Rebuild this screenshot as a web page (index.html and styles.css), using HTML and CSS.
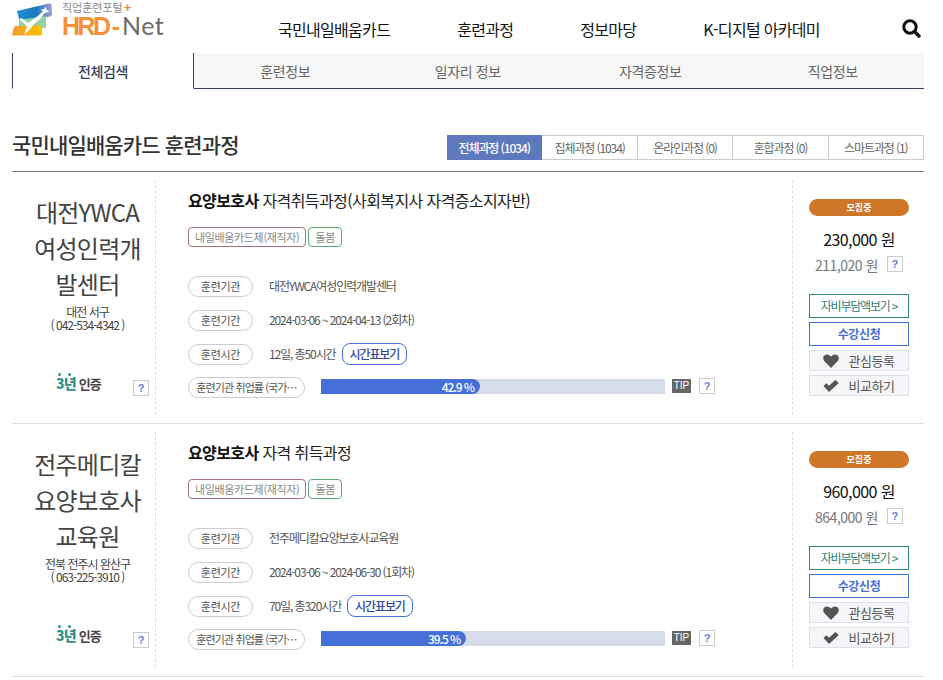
FILE: index.html
```html
<!DOCTYPE html>
<html lang="ko">
<head>
    <meta charset="UTF-8">
    <title>HRD-Net</title>
    <link rel="stylesheet" href="styles.css">
</head>
<body>
    <div class="container">
        <header class="top">
            <a class="logo">
                <svg class="logo-mark" width="40" height="33" viewBox="0 0 40 33">
                    <defs>
                        <linearGradient id="cardTop" x1="0" y1="0" x2="1" y2="0">
                            <stop offset="0" stop-color="#1b8fd6"/>
                            <stop offset="0.55" stop-color="#1f78c0"/>
                            <stop offset="1" stop-color="#a79ccf"/>
                        </linearGradient>
                        <linearGradient id="cardBottom" x1="0" y1="0" x2="1" y2="0">
                            <stop offset="0" stop-color="#f39a2e"/>
                            <stop offset="1" stop-color="#fbc400"/>
                        </linearGradient>
                    </defs>
                    <path d="M5 8 L37 0.500 Q39.500 0 39.600 2.500 L40 13 L8 20 Z" fill="url(#cardTop)"/>
                    <path d="M7 17 L34 13 L34 25 L7 25 Z" fill="#93d3a6"/>
                    <path d="M0 32.500 L1.500 25 Q2 23 4.500 23 L30 22.500 L30 32.500 Z" fill="url(#cardBottom)"/>
                    <path d="M7 16 Q10 14 12 17 L16 20 L22 16 L27 12 L31 8 L28.500 6 L32 6.500 L34 3.500 L34.500 7 L37.500 8.500 L33 10 L28 16 L22 21 L19 25 L12 32 L15 24 L13 21 Z" fill="#fff"/>
                </svg>
                <span class="logo-text">
                    <span class="logo-sub">직업훈련포털<b>+</b></span>
                    <span class="logo-name"><b>HRD</b><i>-</i>Net</span>
                </span>
            </a>
            <nav class="gnb">
                <a>국민내일배움카드</a>
                <a>훈련과정</a>
                <a>정보마당</a>
                <a>K-디지털 아카데미</a>
            </nav>
            <svg class="search" width="20" height="20" viewBox="0 0 20 20">
                <circle cx="9" cy="9" r="6.2" fill="none" stroke="#111" stroke-width="3"/>
                <path d="M13.5 13.5 L18 18" stroke="#111" stroke-width="3.4" stroke-linecap="round"/>
            </svg>
        </header>

        <div class="tabs">
            <a class="tab active">전체검색</a>
            <a class="tab">훈련정보</a>
            <a class="tab">일자리 정보</a>
            <a class="tab">자격증정보</a>
            <a class="tab">직업정보</a>
        </div>

        <div class="list-head">
            <h2>국민내일배움카드 훈련과정</h2>
            <div class="filters">
                <a class="on">전체과정 (1034)</a>
                <a>집체과정 (1034)</a>
                <a>온라인과정 (0)</a>
                <a>혼합과정 (0)</a>
                <a>스마트과정 (1)</a>
            </div>
        </div>

        <div class="list">
            <article class="card">
                <div class="org">
                    <div class="org-name">대전YWCA<br>여성인력개<br>발센터</div>
                    <div class="org-addr">대전 서구<br>( 042-534-4342 )</div>
                    <div class="cert">
                        <span class="cert-text"><b>3년</b> 인증</span>
                        <span class="q">?</span>
                    </div>
                </div>
                <div class="info">
                    <h3><b>요양보호사</b> 자격취득과정(사회복지사 자격증소지자반)</h3>
                    <div class="labels">
                        <span class="label red">내일배움카드제(재직자)</span>
                        <span class="label green">돌봄</span>
                    </div>
                    <div class="row"><span class="pill">훈련기관</span><span class="row-text">대전YWCA여성인력개발센터</span></div>
                    <div class="row"><span class="pill">훈련기간</span><span class="row-text">2024-03-06 ~ 2024-04-13 (2회차)</span></div>
                    <div class="row"><span class="pill">훈련시간</span><span class="row-text">12일, 총50시간</span><a class="time-btn">시간표보기</a></div>
                    <div class="row rate">
                        <span class="pill wide">훈련기관 취업률 (국가…</span>
                        <div class="bar"><div class="fill" style="width: 46.2%">42.9 %</div></div>
                        <span class="tip">TIP</span>
                        <span class="q">?</span>
                    </div>
                </div>
                <div class="side">
                    <div class="status">모집중</div>
                    <div class="price">230,000 원</div>
                    <div class="price-sub">211,020 원<span class="q">?</span></div>
                    <a class="btn teal">자비부담액보기 &gt;</a>
                    <a class="btn blue">수강신청</a>
                    <a class="btn gray">
                        <svg width="16" height="14" viewBox="0 0 16 14"><path d="M8 14 L1.2 7 Q-0.8 4 1.2 1.6 Q4.5 -1 8 2.4 Q11.500 -1 14.800 1.600 Q16.800 4 14.800 7 Z" fill="#555"/></svg>
                        <span>관심등록</span>
                    </a>
                    <a class="btn gray">
                        <svg width="16" height="12" viewBox="0 0 16 12"><path d="M0.500 6 L3.500 3.200 L6 5.700 L12.300 0 L15.800 3 L6 12 Z" fill="#555"/></svg>
                        <span>비교하기</span>
                    </a>
                </div>
            </article>

            <article class="card">
                <div class="org">
                    <div class="org-name">전주메디칼<br>요양보호사<br>교육원</div>
                    <div class="org-addr">전북 전주시 완산구<br>( 063-225-3910 )</div>
                    <div class="cert">
                        <span class="cert-text"><b>3년</b> 인증</span>
                        <span class="q">?</span>
                    </div>
                </div>
                <div class="info">
                    <h3><b>요양보호사</b> 자격 취득과정</h3>
                    <div class="labels">
                        <span class="label red">내일배움카드제(재직자)</span>
                        <span class="label green">돌봄</span>
                    </div>
                    <div class="row"><span class="pill">훈련기관</span><span class="row-text">전주메디칼요양보호사교육원</span></div>
                    <div class="row"><span class="pill">훈련기간</span><span class="row-text">2024-03-06 ~ 2024-06-30 (1회차)</span></div>
                    <div class="row"><span class="pill">훈련시간</span><span class="row-text">70일, 총320시간</span><a class="time-btn">시간표보기</a></div>
                    <div class="row rate">
                        <span class="pill wide">훈련기관 취업률 (국가…</span>
                        <div class="bar"><div class="fill" style="width: 42.2%">39.5 %</div></div>
                        <span class="tip">TIP</span>
                        <span class="q">?</span>
                    </div>
                </div>
                <div class="side">
                    <div class="status">모집중</div>
                    <div class="price">960,000 원</div>
                    <div class="price-sub">864,000 원<span class="q">?</span></div>
                    <a class="btn teal">자비부담액보기 &gt;</a>
                    <a class="btn blue">수강신청</a>
                    <a class="btn gray">
                        <svg width="16" height="14" viewBox="0 0 16 14"><path d="M8 14 L1.2 7 Q-0.8 4 1.2 1.6 Q4.5 -1 8 2.4 Q11.500 -1 14.800 1.600 Q16.800 4 14.800 7 Z" fill="#555"/></svg>
                        <span>관심등록</span>
                    </a>
                    <a class="btn gray">
                        <svg width="16" height="12" viewBox="0 0 16 12"><path d="M0.500 6 L3.500 3.200 L6 5.700 L12.300 0 L15.800 3 L6 12 Z" fill="#555"/></svg>
                        <span>비교하기</span>
                    </a>
                </div>
            </article>
        </div>
    </div>
</body>
</html>
```

FILE: styles.css
```css
* {
    box-sizing: border-box;
}
body {
    margin: 0;
    font-family: "Noto Sans CJK KR", "Noto Sans", sans-serif;
    color: #333;
    background: #fff;
    overflow: hidden;
}
b, i {
    font-style: normal;
}
.container {
    width: 912px;
    margin-left: 12px;
}

/* top */
.top {
    height: 53px;
    display: flex;
    align-items: flex-start;
}
.logo {
    width: 266px;
    display: flex;
}
.logo-mark {
    flex: none;
    margin-top: 3px;
}
.logo-text {
    display: flex;
    flex-direction: column;
    margin-left: 10px;
}
.logo-sub {
    margin-top: 2px;
    font-size: 11px;
    line-height: 11px;
    color: #8a8a8a;
}
.logo-sub b {
    margin-left: 1px;
    color: #f08c2e;
    font-family: "Liberation Sans", sans-serif;
    font-size: 13px;
    line-height: 10px;
}
.logo-name {
    font-family: Lato, "Liberation Sans", sans-serif;
    font-size: 25px;
    line-height: 24px;
    color: #6a6a6a;
    letter-spacing: 0.5px;
}
.logo-name b {
    font-family: "Liberation Sans", sans-serif;
    font-weight: 700;
    color: #f5913a;
    letter-spacing: -2.5px;
}
.logo-name i {
    font-family: "Liberation Sans", sans-serif;
    font-weight: 700;
    color: #f5913a;
    letter-spacing: 0;
    margin: 0 2px 0 3px;
}
.gnb {
    display: flex;
    gap: 67px;
    margin-top: 17px;
    font-size: 16px;
    line-height: 24px;
    color: #111;
    letter-spacing: -0.7px;
}
.search {
    margin: 18px 3px 0 auto;
}

/* tabs */
.tabs {
    display: flex;
    height: 36px;
    background: #f7f7f7;
    border-bottom: 1px solid #34425f;
    font-size: 14px;
    color: #666;
    letter-spacing: -0.4px;
}
.tab {
    flex: 1;
    display: flex;
    align-items: center;
    justify-content: center;
}
.tab.active {
    flex: 0 0 182px;
    background: #fff;
    color: #34425f;
    font-weight: 500;
    border-left: 1px solid #34425f;
    border-right: 1px solid #34425f;
    border-bottom: 1px solid #fff;
    height: 36px;
}

/* list head */
.list-head {
    display: flex;
    justify-content: space-between;
    align-items: center;
    height: 83px;
    padding-top: 46px;
    padding-bottom: 11px;
    border-bottom: 1px solid #777;
}
.list-head h2 {
    margin: 0 0 8px;
    font-size: 21px;
    line-height: 28px;
    font-weight: 500;
    color: #333;
    letter-spacing: -0.85px;
}
.filters {
    display: flex;
    width: 477px;
    height: 25px;
}
.filters a {
    flex: 1;
    border: 1px solid #ccc;
    border-left: 0;
    font-size: 12px;
    line-height: 23px;
    text-align: center;
    color: #666;
    letter-spacing: -1.1px;
}
.filters a.on {
    background: #5c79bd;
    border-color: #5c79bd;
    color: #fff;
    font-weight: 500;
}

/* card */
.card {
    display: flex;
    height: 252px;
    padding: 8px 0;
    border-bottom: 1px solid #ddd;
}
.card:last-child {
    height: 253px;
    padding-bottom: 9px;
}
.org {
    width: 144px;
    flex: none;
    border-right: 1px dashed #ddd;
    padding-left: 8px;
    text-align: center;
    display: flex;
    flex-direction: column;
}
.org-name {
    font-size: 24px;
    line-height: 36px;
    margin-top: 14px;
    color: #444;
    letter-spacing: -0.8px;
}
.org-addr {
    margin-top: 3px;
    font-size: 12px;
    line-height: 13px;
    color: #444;
    letter-spacing: -1px;
}
.cert {
    margin-top: auto;
    margin-bottom: 19px;
    display: flex;
    justify-content: flex-end;
    align-items: flex-end;
    padding-right: 6px;
}
.cert-text {
    margin-right: 32px;
    margin-bottom: 3px;
    font-size: 13px;
    line-height: 18px;
    font-weight: 700;
    color: #444;
    letter-spacing: -0.8px;
}
.cert-text b {
    position: relative;
    color: #2f8f8a;
    font-size: 14px;
}
/* the two dots over the 3년 mark */
.cert-text b::before {
    content: "";
    position: absolute;
    top: 0;
    left: 2px;
    width: 3px;
    height: 3px;
    border-radius: 50%;
    background: #2f8f8a;
    box-shadow: 10px 0 0 #2f8f8a;
}
.q {
    display: inline-block;
    width: 16px;
    height: 16px;
    border: 1px solid #ccc;
    font-family: "Liberation Sans", sans-serif;
    font-size: 11px;
    font-weight: 700;
    line-height: 14px;
    text-align: center;
    color: #5b84e0;
    background: #fff;
    letter-spacing: 0;
}

.info {
    flex: 1;
    padding: 0 0 0 32px;
}
.info h3 {
    margin: 9px 0 0;
    font-size: 16px;
    line-height: 22px;
    font-weight: 400;
    color: #222;
    letter-spacing: -0.6px;
}
.info h3 b {
    font-weight: 700;
    color: #111;
}
.labels {
    display: flex;
    gap: 2px;
    margin-top: 16px;
    margin-bottom: 28px;
}
.label {
    height: 20px;
    padding: 0 6px;
    border: 1px solid;
    border-radius: 4px;
    font-size: 11px;
    line-height: 18px;
    color: #888;
    letter-spacing: -0.35px;
}
.label.red {
    border-color: #a8707f;
}
.label.green {
    border-color: #5fa878;
}
.row {
    display: flex;
    align-items: center;
    height: 22px;
    margin-bottom: 12px;
    font-size: 12px;
    color: #555;
    letter-spacing: -1.1px;
}
.row.rate {
    margin-top: -1px;
}
.row-text {
    margin-bottom: 2px;
}
.pill {
    width: 65px;
    height: 21px;
    flex: none;
    margin-right: 16px;
    border: 1px solid #ccc;
    border-radius: 11px;
    font-size: 11px;
    line-height: 19px;
    text-align: center;
    letter-spacing: -0.3px;
}
.pill.wide {
    width: 117px;
    letter-spacing: -0.9px;
}
.time-btn {
    height: 22px;
    margin-left: 6px;
    padding: 0 7px;
    border: 1px solid #4470d8;
    border-radius: 8px;
    font-size: 12px;
    font-weight: 500;
    line-height: 20px;
    color: #2f4aa0;
}
.bar {
    width: 344px;
    height: 15px;
    flex: none;
    margin-top: -2px;
    background: #d6dcea;
}
.fill {
    height: 100%;
    background: #4470d8;
    border-radius: 0 8px 8px 0;
    color: #fff;
    font-size: 12px;
    font-weight: 500;
    line-height: 15px;
    text-align: right;
    padding-right: 6px;
}
.tip {
    width: 19px;
    height: 14px;
    margin-left: 7px;
    margin-right: 8px;
    margin-top: -2px;
    background: #666;
    color: #fff;
    font-family: "Liberation Sans", sans-serif;
    font-size: 10px;
    line-height: 14px;
    text-align: center;
    letter-spacing: 0;
}
.rate .q {
    margin-top: -2px;
}

.side {
    width: 132px;
    flex: none;
    border-left: 1px dashed #ddd;
    padding: 19px 15px 0 16px;
    display: flex;
    flex-direction: column;
    align-items: center;
}
.status {
    width: 100px;
    height: 17px;
    border-radius: 9px;
    background: #cf7628;
    color: #fff;
    font-size: 9px;
    font-weight: 700;
    line-height: 17px;
    text-align: center;
}
.price {
    margin-top: 12px;
    font-size: 16px;
    line-height: 22px;
    color: #111;
    letter-spacing: -0.6px;
}
.price-sub {
    margin-top: 6px;
    margin-bottom: 20px;
    font-size: 14px;
    line-height: 18px;
    color: #777;
    letter-spacing: -0.5px;
}
.price-sub .q {
    margin-left: 9px;
    vertical-align: top;
}
.btn {
    width: 100px;
    height: 24px;
    margin-bottom: 4px;
    border: 1px solid;
    font-size: 12px;
    line-height: 22px;
    text-align: center;
    letter-spacing: -0.4px;
}
.btn.teal {
    border-color: #2f8a7e;
    color: #2f7f78;
    letter-spacing: -1.2px;
}
.btn.blue {
    border-color: #4470d8;
    color: #4470d8;
    font-weight: 700;
}
.btn.gray {
    height: 21px;
    margin-bottom: 4px;
    border-color: #dde1ec;
    background: #f6f6f8;
    color: #555;
    font-size: 13px;
    line-height: 19px;
    display: flex;
    align-items: center;
    justify-content: center;
    gap: 9px;
}
```
